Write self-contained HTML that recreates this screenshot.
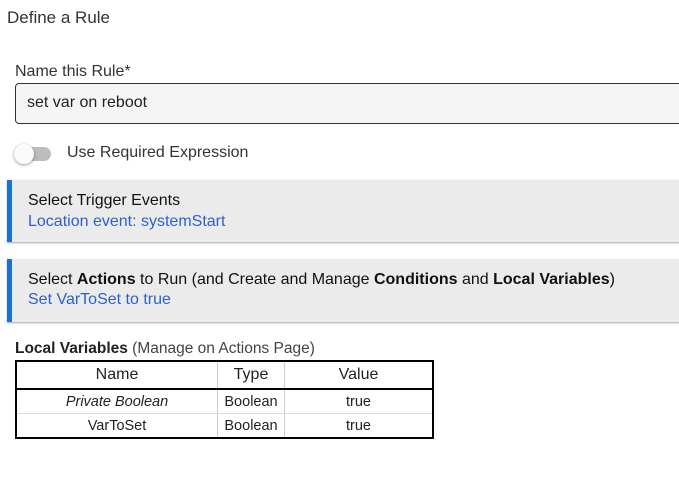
<!DOCTYPE html>
<html><head><style>
body{margin:0;width:679px;height:479px;background:#fff;font-family:"Liberation Sans",sans-serif;position:relative;overflow:hidden;color:#222}
.a{position:absolute}
.panel{position:absolute;left:7px;width:680px;background:#ebebeb;border-left:5px solid #1a73d0;box-sizing:border-box;box-shadow:0 1px 2px rgba(0,0,0,.35)}
.panel div{font-size:16px;position:absolute;left:16px;color:#111;white-space:nowrap}
.lnk{color:#2f5fcc!important}
table{position:absolute;left:15px;top:360px;width:419px;border-collapse:collapse;border:2px solid #000;font-size:14.5px;color:#222}
td,th{text-align:center;border-left:1px solid #ccc;font-weight:normal;padding:0}
th{height:26px;font-size:16px;border-bottom:2px solid #000}
td{height:23px}
tr.r1 td{border-bottom:1px solid #ddd}
</style></head><body>
<div class="a" style="left:7px;top:8px;font-size:17px;color:#333">Define a Rule</div>
<div class="a" style="left:15px;top:63px;font-size:16px;color:#333">Name this Rule*</div>
<div class="a" style="left:15px;top:83px;width:680px;height:41px;box-sizing:border-box;border:1px solid #333;border-radius:4px;background:#f5f5f5"></div>
<div class="a" style="left:27px;top:94px;font-size:16px;color:#222">set var on reboot</div>
<div class="a" style="left:17px;top:147px;width:34px;height:14px;border-radius:7px;background:#bdbdbd"></div>
<div class="a" style="left:14px;top:144px;width:20px;height:20px;border-radius:50%;background:#fafafa;box-shadow:0 1px 3px rgba(0,0,0,.4)"></div>
<div class="a" style="left:67px;top:144px;font-size:16px;color:#333">Use Required Expression</div>
<div class="panel" style="top:180px;height:62px">
<div style="top:12px">Select Trigger Events</div>
<div class="lnk" style="top:33px">Location event: systemStart</div></div>
<div class="panel" style="top:259px;height:63px">
<div style="top:12px">Select <b>Actions</b> to Run (and Create and Manage <b>Conditions</b> and <b>Local Variables</b>)</div>
<div class="lnk" style="top:32px">Set VarToSet to true</div></div>
<div class="a" style="left:15px;top:340px;font-size:15.5px;color:#444"><b style="color:#222">Local Variables</b> (Manage on Actions Page)</div>
<table>
<tr><th style="width:200px;border-left:0">Name</th><th style="width:66px">Type</th><th>Value</th></tr>
<tr class="r1"><td style="border-left:0"><i>Private Boolean</i></td><td>Boolean</td><td>true</td></tr>
<tr><td style="border-left:0">VarToSet</td><td>Boolean</td><td>true</td></tr>
</table>
</body></html>
